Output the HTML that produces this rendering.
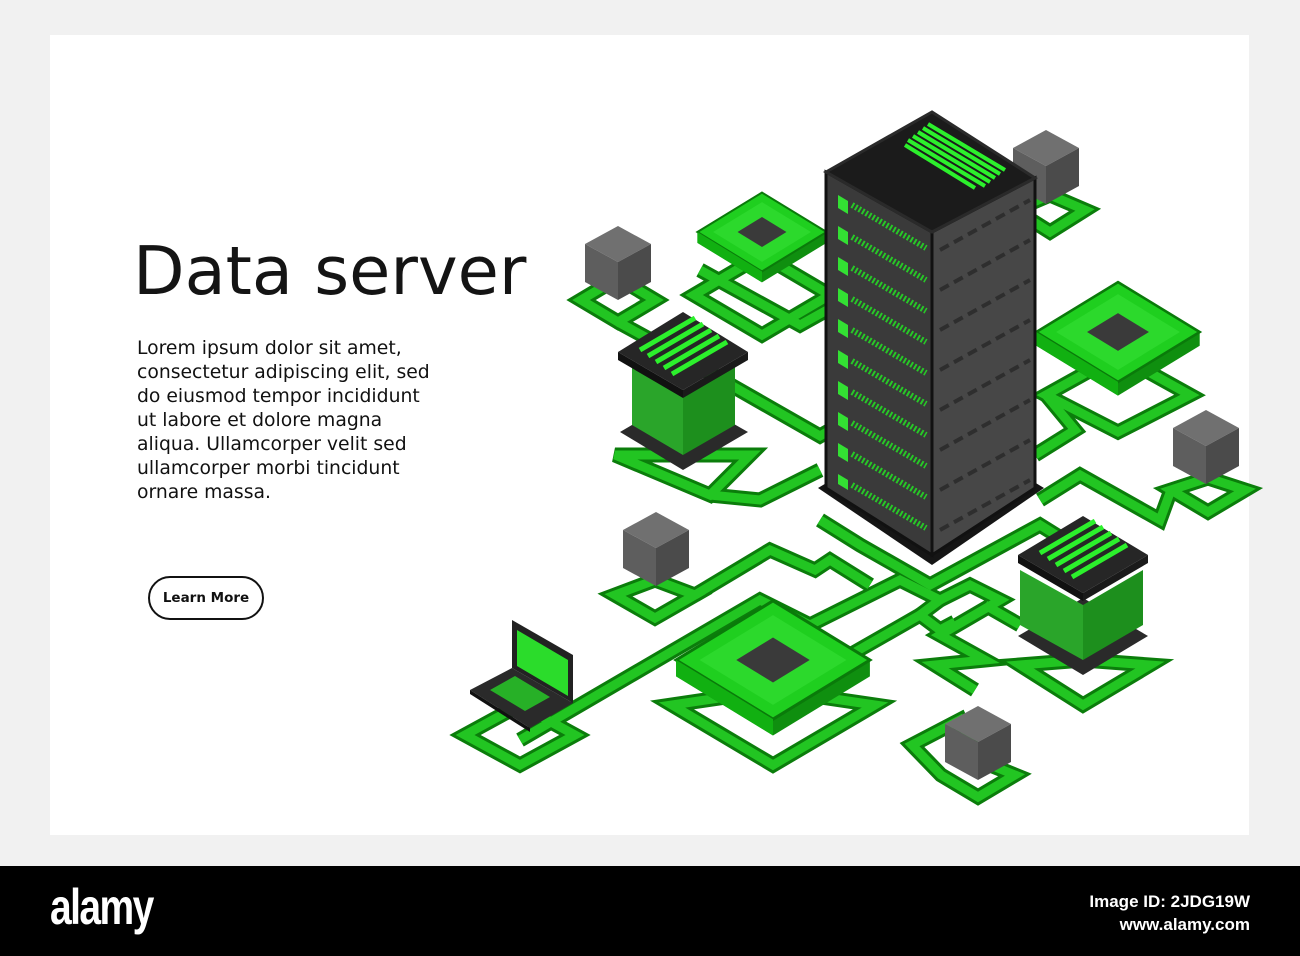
<!DOCTYPE html>
<html><head><meta charset="utf-8"><style>
html,body{margin:0;padding:0}
body{width:1300px;height:956px;background:#f1f1f1;position:relative;overflow:hidden;font-family:"Liberation Sans",sans-serif}
.card{position:absolute;left:50px;top:35px;width:1199px;height:800px;background:#fff}
h1{position:absolute;left:133px;top:237px;margin:0;font-family:"DejaVu Sans","Liberation Sans",sans-serif;font-weight:normal;font-size:67px;line-height:68px;color:#141414;white-space:nowrap}
p{position:absolute;left:137px;top:337px;margin:0;font-family:"DejaVu Sans","Liberation Sans",sans-serif;font-size:18.8px;line-height:24px;color:#111;white-space:nowrap}
.btn{position:absolute;left:148px;top:576px;width:112px;height:40px;border:2px solid #111;border-radius:22px;font-family:"DejaVu Sans",sans-serif;font-weight:bold;font-size:13.5px;line-height:40px;text-align:center;color:#111}
.bar{position:absolute;left:0;top:866px;width:1300px;height:90px;background:#000}
.logo{position:absolute;left:50px;top:878px;color:#fff;font-size:50px;font-weight:bold;letter-spacing:-2px;transform:scaleX(0.78);transform-origin:left}
.id{position:absolute;right:50px;top:890px;color:#fff;font-weight:bold;font-size:17px;text-align:right;line-height:23px}
svg{position:absolute;left:0;top:0}
</style></head><body>
<div class="card"></div>
<h1>Data server</h1>
<p>Lorem ipsum dolor sit amet,<br>consectetur adipiscing elit, sed<br>do eiusmod tempor incididunt<br>ut labore et dolore magna<br>aliqua. Ullamcorper velit sed<br>ullamcorper morbi tincidunt<br>ornare massa.</p>
<div class="btn">Learn More</div>
<svg width="1300" height="866" viewBox="0 0 1300 866">
<defs>
<g id="net">
<polygon points="618,278 655,300 618,322 581,300"/>
<polyline points="618,322 680,356 820,436 900,390"/>
<polygon points="762,255 830,295 762,335 694,295"/>
<polyline points="830,295 880,320"/>
<polygon points="1050,195 1085,210 1050,232 1015,210"/>
<polygon points="1118,355 1190,395 1118,432 1046,395"/>
<polyline points="1046,395 1075,430 1035,455"/>
<polygon points="1208,478 1245,490 1208,512 1171,490"/>
<polyline points="1171,490 1160,520 1080,475 1040,500"/>
<polygon points="683,455 750,455 710,495 615,455"/>
<polyline points="710,495 760,500 820,470"/>
<polyline points="820,520 860,545 930,585 1040,525 1080,550"/>
<polygon points="655,580 695,595 655,618 615,595"/>
<polyline points="695,595 770,550 815,570 830,560 870,585"/>
<polyline points="520,740 760,600 810,625 900,580 940,600 920,615"/>
<polygon points="520,705 575,735 520,765 465,735"/>
<polygon points="773,690 875,705 773,765 672,705"/>
<polyline points="850,655 920,615 940,630 955,622"/>
<polyline points="940,600 970,585 1000,600 940,635 985,660 935,665 975,690"/>
<polygon points="978,760 1015,775 978,797 941,775 912,745 960,720"/>
<polygon points="1083,660 1150,665 1083,705 1020,665"/>
<polyline points="985,605 1020,625"/>
<polyline points="700,270 800,325 845,300"/>
</g>
<g id="cube">
<polygon points="0,-36 33,-18 0,0 -33,-18" fill="#707070"/>
<polygon points="-33,-18 0,0 0,38 -33,20" fill="#5e5e5e"/>
<polygon points="33,-18 0,0 0,38 33,20" fill="#4b4b4b"/>
</g>
<g id="chip">
<polygon points="0,-58 95,0 95,16 0,74 -95,16 -95,0" fill="#0f8f0f"/>
<polygon points="0,-58 95,0 0,58 -95,0" fill="#1fcf1f" stroke="#0a7a0a" stroke-width="3"/>
<polygon points="0,-44 72,0 0,44 -72,0" fill="#35e035" opacity=".6"/>
<polygon points="0,-22 36,0 0,22 -36,0" fill="#3a3a3a"/>
<polygon points="-95,0 0,58 0,74 -95,16" fill="#11b011"/>
</g>
</defs>
<g fill="none" stroke-linejoin="miter">
<use href="#net" stroke="#0b7d0b" stroke-width="15"/>
<use href="#net" stroke="#22c522" stroke-width="9"/>
</g>
<use href="#cube" x="618" y="262"/>
<use href="#cube" x="1046" y="166"/>
<use href="#cube" x="1206" y="446"/>
<use href="#cube" x="656" y="548"/>
<use href="#cube" x="978" y="742"/>
<g transform="translate(762,232) scale(0.68)"><use href="#chip"/></g>
<g transform="translate(1118,332) scale(0.86)"><use href="#chip"/></g>
<g transform="translate(773,660) scale(1.02)"><use href="#chip"/></g>
<g>
<polygon points="620,432 683,395 748,432 683,470" fill="#2a2a2a"/>
<polygon points="632,365 683,395 683,455 632,425" fill="#2aa52a"/>
<polygon points="735,365 683,395 683,455 735,425" fill="#1d8f1d"/>
<polygon points="618,352 683,312 748,352 683,390" fill="#262626"/>
<polygon points="618,352 683,390 683,398 618,360" fill="#111"/>
<polygon points="748,352 683,390 683,398 748,360" fill="#1a1a1a"/>
<g stroke="#2cf02c" stroke-width="5"><line x1="640" y1="350" x2="695" y2="318"/><line x1="648" y1="356" x2="703" y2="324"/><line x1="656" y1="362" x2="711" y2="330"/><line x1="664" y1="368" x2="719" y2="336"/><line x1="672" y1="374" x2="727" y2="342"/></g>
</g>
<g>
<polygon points="1018,636 1083,598 1148,636 1083,675" fill="#2a2a2a"/>
<polygon points="1020,570 1083,605 1083,660 1020,625" fill="#2aa52a"/>
<polygon points="1143,570 1083,605 1083,660 1143,625" fill="#1d8f1d"/>
<polygon points="1018,555 1083,516 1148,555 1083,593" fill="#262626"/>
<polygon points="1018,555 1083,593 1083,601 1018,563" fill="#111"/>
<polygon points="1148,555 1083,593 1083,601 1148,563" fill="#1a1a1a"/>
<g stroke="#2cf02c" stroke-width="5"><line x1="1040" y1="553" x2="1095" y2="521"/><line x1="1048" y1="559" x2="1103" y2="527"/><line x1="1056" y1="565" x2="1111" y2="533"/><line x1="1064" y1="571" x2="1119" y2="539"/><line x1="1072" y1="577" x2="1127" y2="545"/></g>
</g>
<polygon points="470,690 512,668 573,703 530,728" fill="#2a2a2a"/>
<polygon points="512,668 512,620 573,655 573,703" fill="#222"/>
<polygon points="517,666 517,630 568,660 568,696" fill="#2bdc2b"/>
<polygon points="490,690 515,676 550,697 525,711" fill="#27b027"/>
<polygon points="470,690 530,728 530,732 470,694" fill="#111"/>
<polygon points="818,488 932,420 1044,488 932,565" fill="#151515"/>
<polygon points="826,172 932,232 932,555 826,488" fill="#3a3a3a" stroke="#111" stroke-width="3"/>
<polygon points="1035,178 932,232 932,555 1035,488" fill="#474747" stroke="#111" stroke-width="3"/>
<polygon points="826,172 932,112 1035,178 932,232" fill="#1b1b1b" stroke="#2a2a2a" stroke-width="3"/>
<g stroke="#2cf02c" stroke-width="4">
<line x1="908" y1="140" x2="985" y2="186"/><line x1="913" y1="136" x2="990" y2="182"/>
<line x1="918" y1="132" x2="995" y2="178"/><line x1="923" y1="128" x2="1000" y2="174"/>
<line x1="928" y1="124" x2="1005" y2="170"/><line x1="905" y1="145" x2="975" y2="188"/>
</g>
<g fill="none" stroke="#27c827" stroke-width="6" stroke-dasharray="2 2">
<line x1="852" y1="205" x2="926" y2="248"/><line x1="852" y1="237" x2="926" y2="280"/><line x1="852" y1="268" x2="926" y2="311"/><line x1="852" y1="299" x2="926" y2="342"/><line x1="852" y1="330" x2="926" y2="373"/><line x1="852" y1="361" x2="926" y2="404"/><line x1="852" y1="392" x2="926" y2="435"/><line x1="852" y1="423" x2="926" y2="466"/><line x1="852" y1="454" x2="926" y2="497"/><line x1="852" y1="485" x2="926" y2="528"/>
</g>
<g fill="#33e033">
<polygon points="838,195 848,201 848,214 838,208"/><polygon points="838,226 848,232 848,245 838,239"/><polygon points="838,257 848,263 848,276 838,270"/><polygon points="838,288 848,294 848,307 838,301"/><polygon points="838,319 848,325 848,338 838,332"/><polygon points="838,350 848,356 848,369 838,363"/><polygon points="838,381 848,387 848,400 838,394"/><polygon points="838,412 848,418 848,431 838,425"/><polygon points="838,443 848,449 848,462 838,456"/><polygon points="838,474 848,480 848,490 838,484"/>
</g>
<g stroke="#2e2e2e" stroke-width="4" stroke-dasharray="10 6">
<line x1="940" y1="250" x2="1030" y2="200"/><line x1="940" y1="290" x2="1030" y2="240"/><line x1="940" y1="330" x2="1030" y2="280"/><line x1="940" y1="370" x2="1030" y2="320"/><line x1="940" y1="410" x2="1030" y2="360"/><line x1="940" y1="450" x2="1030" y2="400"/><line x1="940" y1="490" x2="1030" y2="440"/><line x1="940" y1="530" x2="1030" y2="480"/>
</g>
</svg>
<div class="bar"></div>
<div class="logo">alamy</div>
<div class="id">Image ID: 2JDG19W<br>www.alamy.com</div>
</body></html>
